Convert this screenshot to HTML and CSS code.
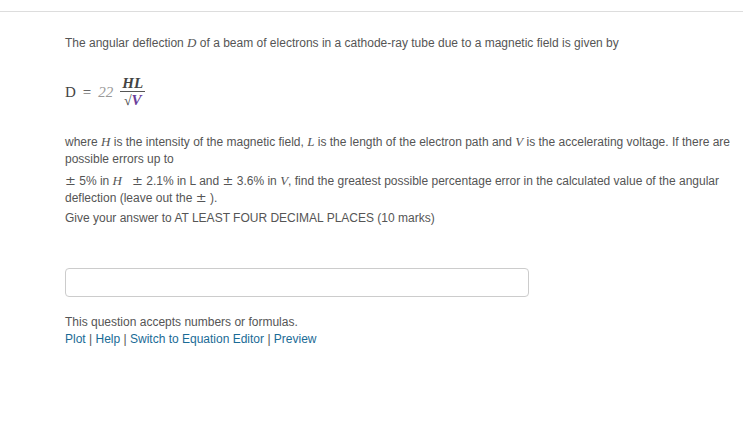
FILE: index.html
```html
<!DOCTYPE html>
<html lang="en">
<head>
  <meta charset="UTF-8">
  <title>Question</title>
  <link rel="stylesheet" href="styles.css">
</head>
<body>
  <div class="top-bar"></div>
  <div class="question">
    <p class="intro">The angular deflection <span class="mi">D</span> of a beam of electrons in a cathode-ray tube due to a magnetic field is given by</p>
    <div class="formula">
      <span class="mrm">D</span>
      <span class="mo">=</span>
      <span class="mnum">22</span>
      <span class="frac">
        <span class="num"><span class="mi">HL</span></span>
        <span class="den"><span class="sqrt">&radic;</span><span class="mi purple">V</span></span>
      </span>
    </div>
    <p class="body-text">where <span class="mi">H</span> is the intensity of the magnetic field, <span class="mi">L</span> is the length of the electron path and <span class="mi">V</span> is the accelerating voltage. If there are possible errors up to</p>
    <p class="body-text errors"><span class="pm">&plusmn;</span> 5% in <span class="mi">H</span> &nbsp;&nbsp;<span class="pm">&plusmn;</span> 2.1% in L and <span class="pm">&plusmn;</span> 3.6% in <span class="mi">V</span>, find the greatest possible percentage error in the calculated value of the angular deflection (leave out the <span class="pm">&plusmn;</span> ).</p>
    <p class="body-text">Give your answer to AT LEAST FOUR DECIMAL PLACES (10 marks)</p>
    <div class="answer">
      <input type="text" class="answer-input">
    </div>
    <p class="hint">This question accepts numbers or formulas.<br>
      <a href="#">Plot</a> | <a href="#">Help</a> | <a href="#">Switch to Equation Editor</a> | <a href="#">Preview</a></p>
  </div>
</body>
</html>
```

FILE: styles.css
```css
body {
  margin: 0;
  font-family: "Liberation Sans", Arial, sans-serif;
  font-size: 12px;
  color: #555;
  background: #fff;
}
.top-bar {
  height: 11px;
  border-bottom: 1px solid #ddd;
}
.question {
  padding: 23px 0 0 65px;
  width: 665px;
}
p { margin: 0; line-height: 17px; }
.mi {
  font-family: "Liberation Serif", "Times New Roman", serif;
  font-style: italic;
  font-size: 13px;
  line-height: 1;
}
.pm {
  font-family: "DejaVu Serif", serif;
  font-size: 13px;
  line-height: 1;
}
.intro { margin-bottom: 20px; }
.formula {
  display: flex;
  align-items: center;
  gap: 5px;
  height: 40px;
  margin-bottom: 22px;
  font-family: "Liberation Serif", "Times New Roman", serif;
  font-size: 15px;
  color: #444;
}
.mo { margin: 0 2px; }
.mnum { font-style: italic; color: #999; }
.frac {
  display: inline-flex;
  flex-direction: column;
  align-items: center;
  margin-left: 2px;
}
.frac .mi { font-size: 15px; font-weight: bold; }
.num {
  border-bottom: 1px solid #555;
  padding: 0 2px;
  line-height: 15px;
}
.den {
  line-height: 17px;
}
.sqrt { font-size: 14px; }
.purple { color: #6a3d9a; }
.body-text { margin-bottom: 5px; }
.body-text.errors { margin-bottom: 3px; }
.answer { margin-top: 41px; margin-bottom: 17px; }
.answer-input {
  box-sizing: border-box;
  width: 464px;
  height: 29px;
  border: 1px solid #ccc;
  border-radius: 4px;
  margin: 0;
}
.hint a { color: #1a6b96; text-decoration: none; }
```
